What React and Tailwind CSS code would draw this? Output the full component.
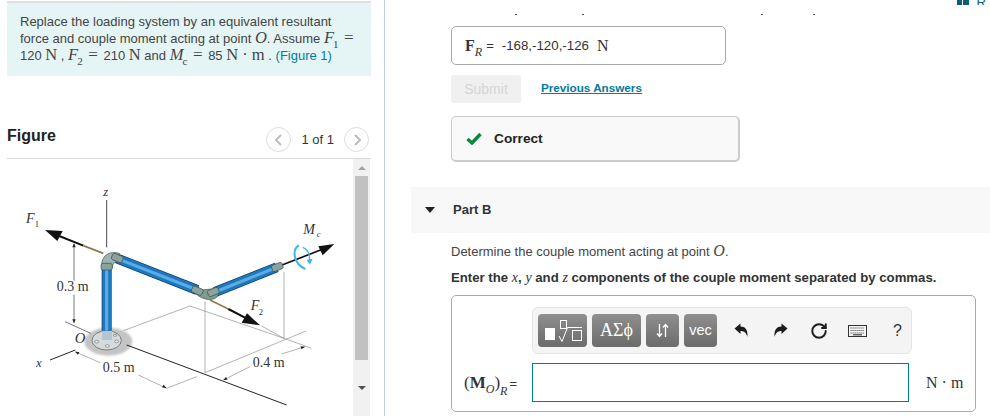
import { RotateCw } from 'lucide-react';

const serif = "font-['Liberation_Serif',serif]";

const Sym = ({ children, sub, className = 'text-[16.5px]' }) => (
  <span className={`${serif} italic ${className}`}>
    {children}
    {sub && <sub className="text-[11px] not-italic align-[-2px] leading-none -ml-px">{sub}</sub>}
  </span>
);

const Unit = ({ children }) => <span className={`${serif} text-[16.5px]`}>{children}</span>;

const Eq = () => <span className={`${serif} text-[17px] mx-[2px]`}>=</span>;

const Pipe = ({ d }) => (
  <g fill="none">
    <path d={d} stroke="#123f63" strokeWidth="30" />
    <path d={d} stroke="#1f78bd" strokeWidth="26" />
    <path d={d} stroke="#57aee6" strokeWidth="9" />
  </g>
);

const Collar = ({ x, y, r = 0 }) => (
  <rect x={x - 17} y={y - 10} width="34" height="20" rx="6" fill="#8aa39c" stroke="#3c4d4a" strokeWidth="2" transform={`rotate(${r} ${x} ${y})`} />
);

const labelCls = "font-['Liberation_Serif',serif]";

const PipeFigure = () => (
  <svg viewBox="0 -33 1059 771" className="w-[353px] h-[257px] shrink-0">
    <ellipse cx="325" cy="515" rx="72" ry="42" fill="#c4c4c4" className="blur-[3px]" />
    {/* grey construction lines */}
    <g stroke="#8c8c8c" strokeWidth="2" fill="none">
      <path d="M370 482L570 408L852 505" />
      <path d="M615 395V608L918 483" />
      <path d="M852 305V505L935 535" />
      <path d="M785 468L852 505" />
      <path d="M225 545L300 578M415 615L500 655L590 620" />
      <path d="M670 630L750 590M845 552L915 530" />
    </g>
    <g stroke="#333" strokeWidth="2" fill="none">
      <path d="M222 222V332M222 374V458" />
      <path d="M195 455L272 490" />
    </g>
    <path d="M320 90V232" stroke="#222" strokeWidth="2.5" />
    <path d="M380 525L860 705" stroke="#222" strokeWidth="3" />
    <path d="M150 570L226 540" stroke="#222" strokeWidth="3" />
    <path d="M222 220l-5 12h10zM222 460l-5 -12h10zM500 655l-14 -3l5 -8zM670 630l13 -1l-5 -8zM915 530l-14 -1l4 9zM225 545l13 1l-4 8z" fill="#222" />

    {/* F1 */}
    <path d="M250 227L170 195" stroke="#111" strokeWidth="6" />
    <path d="M135 180L188 183L172 213Z" fill="#111" />
    <path d="M310 250L250 227" stroke="#8f7a4f" strokeWidth="6" />

    {/* base */}
    <ellipse cx="320" cy="511" rx="44" ry="29" fill="#d5dade" stroke="#555" strokeWidth="2" />
    <g fill="#eee" stroke="#555" strokeWidth="1.5">
      <ellipse cx="290" cy="515" rx="6" ry="4" />
      <ellipse cx="322" cy="528" rx="6" ry="4" />
      <ellipse cx="350" cy="514" rx="6" ry="4" />
      <ellipse cx="345" cy="496" rx="5" ry="3" />
    </g>
    <rect x="306" y="478" width="30" height="32" fill="#b6c4cf" />

    {/* pipes */}
    <Pipe d="M320 295V482" />
    <Pipe d="M350 265L592 360" />
    <Pipe d="M645 366L830 292" />
    <path d="M305 285C305 255 330 242 358 250L362 278C342 272 338 280 336 296Z" fill="#9db5ae" stroke="#3c4d4a" strokeWidth="2" />
    <Collar x="320" y="290" />
    <Collar x="352" y="264" r="22" />
    <path d="M582 362L645 356L655 375C645 395 610 392 588 372Z" fill="#7f9b94" stroke="#3c4d4a" strokeWidth="2" />
    <Collar x="592" y="362" r="24" />
    <Collar x="640" y="366" r="-22" />
    <Collar x="832" y="291" r="-22" />

    {/* F2 */}
    <path d="M630 390L685 417" stroke="#8f7a4f" strokeWidth="5" />
    <path d="M685 417L745 448" stroke="#111" strokeWidth="6" />
    <path d="M780 466L725 458L741 430Z" fill="#111" />

    {/* Mc */}
    <path d="M848 284L975 235" stroke="#111" strokeWidth="5" />
    <path d="M1003 222L955 229L968 256Z" fill="#111" />
    <path d="M897 226C875 238 880 282 916 297" fill="none" stroke="#3ab6ee" strokeWidth="6" />
    <path d="M908 232C925 238 930 256 928 274" fill="none" stroke="#3ab6ee" strokeWidth="4" />
    <path d="M920 270L938 266L930 284Z" fill="#3ab6ee" />

    <g className={labelCls} fill="#333" fontSize="42">
      <text x="170" y="362">0.3 m</text>
      <text x="308" y="607">0.5 m</text>
      <text x="758" y="592">0.4 m</text>
      <g fontStyle="italic">
        <text x="310" y="78" fontSize="38">z</text>
        <text x="108" y="592" fontSize="38">x</text>
        <text x="224" y="520" fontSize="44">O</text>
        <text x="78" y="160" fontSize="42">F</text>
        <text x="104" y="170" fontSize="26" fontStyle="normal">1</text>
        <text x="752" y="420" fontSize="42">F</text>
        <text x="776" y="434" fontSize="26" fontStyle="normal">2</text>
        <text x="910" y="192" fontSize="42">M</text>
        <text x="950" y="202" fontSize="26">c</text>
      </g>
    </g>
  </svg>
);

const Scrollbar = () => (
  <div className="w-[17px] h-[257px] bg-[#f1f1f1] flex flex-col items-center">
    <div className="h-[17px] flex items-center justify-center">
      <div className="w-0 h-0 border-x-[4px] border-x-transparent border-b-[4px] border-b-[#a3a3a3]" />
    </div>
    <div className="w-[13px] h-[184px] bg-[#c1c1c1]" />
    <div className="flex-1 flex items-center justify-center">
      <div className="w-0 h-0 border-x-[4px] border-x-transparent border-t-[4px] border-t-[#505050]" />
    </div>
  </div>
);

const NavCircle = ({ dir }) => (
  <div className="w-[25px] h-[25px] rounded-full border border-[#ddd] bg-white flex items-center justify-center">
    <svg width="10" height="12" viewBox="0 0 10 12" fill="none" stroke="#bdbdbd" strokeWidth="2">
      <path d={dir === 'l' ? 'M7 1L2 6L7 11' : 'M3 1L8 6L3 11'} />
    </svg>
  </div>
);

const ToolBtn = ({ className = '', children }) => (
  <div className={`h-[33px] rounded-[4px] bg-gradient-to-b from-[#8f8f8f] to-[#6b6b6b] flex items-center justify-center text-white ${className}`}>
    {children}
  </div>
);

const ArrowIcon = ({ flip }) => (
  <svg width="15" height="15" viewBox="0 0 15 15" className={flip ? '-scale-x-100' : ''}>
    <path d="M0.5 5.5L6.5 0.5V3.6C11 3.6 14 6.5 13.5 14C12.3 10 10.5 8 6.5 8V11Z" fill="#1c1c1c" />
  </svg>
);

const KeyboardIcon = () => (
  <svg width="19" height="12" viewBox="0 0 19 12">
    <rect x="0.5" y="0.5" width="18" height="11" fill="#f4f4f4" stroke="#333" />
    <path d="M2.5 3h14M2.5 5.5h14M2.5 8h14" stroke="#555" strokeWidth="1.2" strokeDasharray="1.2 0.8" />
    <path d="M5 9.8h9" stroke="#444" strokeWidth="1.2" />
  </svg>
);

export default function App() {
  return (
    <div className="w-[990px] h-[416px] overflow-hidden flex bg-white text-[#333] font-['Liberation_Sans',Arial,sans-serif]">
      {/* left column */}
      <div className="w-[385px] h-full shrink-0 border-r border-[#b9cfe2] pl-[7px] pr-[13px] pt-px">
        <div className="h-[75px] border-t-2 border-[#dcdfe0] bg-[#e5f5f6] pl-[13px] pr-[10px] pt-[11px] text-[13px] leading-[16px] text-[#444]">
          <div className="whitespace-nowrap">Replace the loading system by an equivalent resultant</div>
          <div className="whitespace-nowrap">force and couple moment acting at point <Sym>O</Sym>. Assume <Sym sub="1">F</Sym> <Eq /></div>
          <div className="whitespace-nowrap">120 <Unit>N</Unit> , <Sym sub="2">F</Sym> <Eq /> 210 <Unit>N</Unit> and <Sym sub="c">M</Sym> <Eq /> 85 <Unit>N · m</Unit> . <span className="text-[#007c9e]">(Figure 1)</span></div>
        </div>

        <div className="mt-[45px] h-[38px] border-b border-[#d9d9d9] flex items-start justify-between pr-[2px]">
          <div className="text-[16px] font-bold text-[#222] leading-[30px]">Figure</div>
          <div className="flex items-center gap-[10px] pt-[6px]">
            <NavCircle dir="l" />
            <span className="text-[13px] text-[#333]">1 of 1</span>
            <NavCircle dir="r" />
          </div>
        </div>

        <div className="flex -ml-[7px]">
          <PipeFigure />
          <Scrollbar />
        </div>
      </div>

      {/* right column */}
      <div className="flex-1 min-w-0 text-[13px]">
        <div className="h-[5px] overflow-hidden flex justify-end gap-[8px] pr-[4px]">
          <div className="w-[12px] h-[5px] bg-[#0b5e73] border-x-[5.5px] border-x-[#0b5e73] flex justify-center">
            <div className="w-px h-[5px] bg-white" />
          </div>
          <span className="text-[13px] leading-[5px] text-[#0b5e73]">R</span>
        </div>
        <div className="h-[21px] pt-[9px] flex">
          <div className="w-[2px] h-px bg-[#555] ml-[130px]" />
          <div className="w-[2px] h-px bg-[#555] ml-[65px]" />
          <div className="w-[2px] h-px bg-[#555] ml-[177px]" />
          <div className="w-[2px] h-px bg-[#555] ml-[50px]" />
        </div>

        <div className="pl-[66px]">
          <div className="w-[275px] h-[39px] border border-[#a9a9a9] rounded-[5px] flex items-center pl-[13px] gap-[4px]">
            <span className={`${serif} font-bold text-[16px]`}>F<sub className="italic font-normal text-[12px] align-[-2px] leading-none">R</sub></span>
            <span className="text-[13px]">=</span>
            <span className="text-[13.3px] ml-[4px]">-168,-120,-126</span>
            <span className={`${serif} text-[16px] ml-[4px]`}>N</span>
          </div>

          <div className="mt-[10px] flex items-start">
            <div className="w-[70px] h-[28px] rounded-[3px] bg-[#f0f0f0] text-[#d5d5d5] text-[14px] flex items-center justify-center">Submit</div>
            <a className="ml-[20px] mt-[4px] text-[11.7px] font-bold text-[#007c9e] underline leading-[17px]">Previous Answers</a>
          </div>

          <div className="mt-[13px] w-[289px] h-[46px] rounded-[5px] border border-[#ccc] border-r-2 border-b-2 bg-[#f9f9f9] flex items-center pl-[14px] gap-[12px]">
            <svg width="16" height="13" viewBox="0 0 16 13">
              <path d="M1.5 7L6 11L14.5 2" fill="none" stroke="#0a8a3c" strokeWidth="3.4" />
            </svg>
            <span className="text-[13.7px] font-bold text-[#222] leading-[20px] mt-px">Correct</span>
          </div>
        </div>

        <div className="mt-[25px] ml-[26px] h-[46px] bg-[#f8f8f8] flex items-center pl-[14px]">
          <div className="w-0 h-0 border-x-[5px] border-x-transparent border-t-[6px] border-t-[#222]" />
          <span className="ml-[18px] text-[13px] font-bold text-[#333]">Part B</span>
        </div>

        <div className="pl-[66px]">
          <p className="mt-[9px] leading-[18px] text-[#444] text-[13px]">Determine the couple moment acting at point <Sym className="text-[16px]">O</Sym>.</p>
          <p className="mt-[8px] leading-[18px] font-bold text-[13.2px] text-[#333] whitespace-nowrap">
            Enter the <Sym className="font-normal text-[14px]">x</Sym>, <Sym className="font-normal text-[14px]">y</Sym> and <Sym className="font-normal text-[14px]">z</Sym> components of the couple moment separated by commas.
          </p>

          <div className="mt-[8px] w-[525px] h-[117px] border border-[#aaa] rounded-[5px] pt-[11px] pl-[80px]">
            <div className="w-[380px] h-[47px] bg-[#f4f4f4] border border-[#e4e4e4] rounded-[6px] flex items-center pl-[5px]">
              <ToolBtn className="w-[49px]">
                <svg width="49" height="33" viewBox="0 0 49 33" fill="none" stroke="#fff" strokeWidth="1">
                  <rect x="7" y="14" width="10" height="12" fill="#fff" stroke="none" />
                  <rect x="22.5" y="6.5" width="6" height="8" />
                  <path d="M21 22L24 27.5L29.5 13.5H44" />
                  <rect x="34.5" y="16.5" width="9" height="10" />
                </svg>
              </ToolBtn>
              <ToolBtn className={`w-[49px] ml-[5px] text-[18px] ${serif}`}>ΑΣϕ</ToolBtn>
              <ToolBtn className="w-[33px] ml-[5px]">
                <svg width="15" height="15" viewBox="0 0 15 15" fill="none" stroke="#fff" strokeWidth="1.3">
                  <path d="M4.5 1V13M2 10.5L4.5 13.5L7 10.5M10.5 14V2M8 4.5L10.5 1.5L13 4.5" />
                </svg>
              </ToolBtn>
              <ToolBtn className="w-[33px] ml-[5px] text-[14.5px]">vec</ToolBtn>
              <div className="ml-[17px] w-[15px] flex"><ArrowIcon /></div>
              <div className="ml-[24px] w-[15px] flex"><ArrowIcon flip /></div>
              <RotateCw className="ml-[22px] text-[#1c1c1c]" size={18} strokeWidth={2.6} />
              <div className="ml-[20px]"><KeyboardIcon /></div>
              <span className="ml-[26px] text-[16px] text-[#333]">?</span>
            </div>

            <div className="mt-[9px] -ml-[80px] flex items-center">
              <div className="w-[80px] pl-[12px] flex items-baseline whitespace-nowrap">
                <span className={`${serif} text-[17px]`}>(<b>M</b><sub className="italic text-[12px] align-[-2px] leading-none">O</sub>)<sub className="italic text-[12px] align-[-4px] leading-none">R</sub></span>
                <span className="text-[13px] ml-[2px]">=</span>
              </div>
              <div className="w-[377px] h-[39px] border border-[#007c9e] bg-white" />
              <span className={`${serif} ml-[17px] text-[16px] whitespace-nowrap`}>N · m</span>
            </div>
          </div>
        </div>
      </div>
    </div>
  );
}
